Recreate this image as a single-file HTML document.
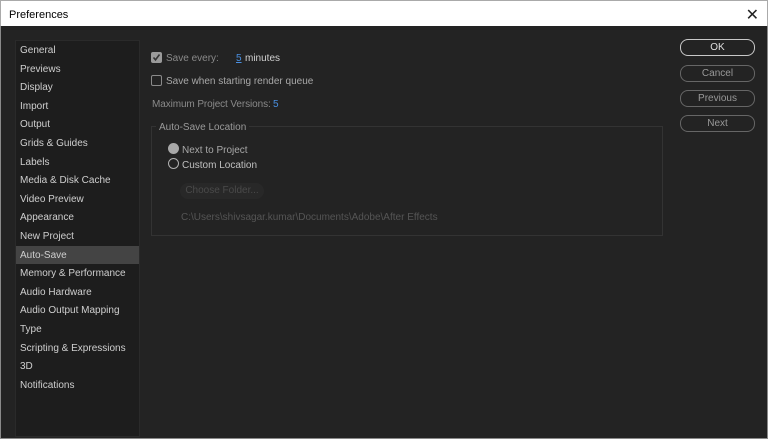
<!DOCTYPE html>
<html><head><meta charset="utf-8"><style>
*{margin:0;padding:0;box-sizing:border-box}
body{width:768px;height:439px;overflow:hidden;background:#232323;font-family:"Liberation Sans",sans-serif;font-size:10px;color:#c4c4c4;position:relative}
.title{position:absolute;left:0;top:0;width:768px;height:26px;background:#fff;border:1px solid #aaa;border-bottom:none;color:#000;font-size:11px;padding:8px 0 0 8px}
.x{position:absolute;right:8px;top:4px;font-size:16px;color:#222}
.frame{position:absolute;left:0;top:26px;width:768px;height:413px;border:1px solid #8a8a8a;border-top:none}
.side{position:absolute;left:15px;top:40px;width:125px;height:397px;background:#1d1d1d;border:1px solid #2a2a2a}
.side div{height:18.6px;line-height:19.6px;padding-left:4px;color:#cfcfcf}
.side .sel{background:#444}
.a{position:absolute;white-space:nowrap;margin-top:1px}
.cb{position:absolute;width:11px;height:11px;border:1px solid #8a8a8a;border-radius:2px}
.blue{color:#4a8fe0}
.grp{position:absolute;left:151px;top:126px;width:512px;height:110px;border:1px solid #333}
.btn{position:absolute;left:680px;width:75px;height:17px;border:1.5px solid #9a9a9a;border-radius:8px;text-align:center;line-height:15px;color:#999}
.rad{position:absolute;width:11px;height:11px;border-radius:50%}
</style></head><body>
<div class="title">Preferences<span class="x">✕</span></div>
<div class="frame"></div>
<div class="side">
<div>General</div><div>Previews</div><div>Display</div><div>Import</div><div>Output</div><div>Grids &amp; Guides</div><div>Labels</div><div>Media &amp; Disk Cache</div><div>Video Preview</div><div>Appearance</div><div>New Project</div><div class="sel">Auto-Save</div><div>Memory &amp; Performance</div><div>Audio Hardware</div><div>Audio Output Mapping</div><div>Type</div><div>Scripting &amp; Expressions</div><div>3D</div><div>Notifications</div>
</div>
<div class="cb" style="left:151px;top:52px;background:#9a9a9a;border-color:#9a9a9a"><svg width="9" height="9" viewBox="0 0 9 9" style="position:absolute;left:0;top:0"><path d="M1.5 4.5 L3.5 6.8 L7.5 1.5" stroke="#333" stroke-width="1.6" fill="none"/></svg></div>
<div class="a" style="left:166px;top:52px;color:#8a8a8a">Save every:</div>
<div class="a blue" style="left:236px;top:52px;text-decoration:underline">5</div>
<div class="a" style="left:245px;top:52px;color:#d0d0d0">minutes</div>
<div class="cb" style="left:151px;top:75px"></div>
<div class="a" style="left:166px;top:75px;color:#a8a8a8">Save when starting render queue</div>
<div class="a" style="left:152px;top:98px;color:#8a8a8a;letter-spacing:-0.1px">Maximum Project Versions:</div>
<div class="a blue" style="left:273px;top:98px">5</div>
<div class="grp"></div>
<div class="a" style="left:156px;top:121px;background:#232323;padding:0 3px;color:#9a9a9a">Auto-Save Location</div>
<div class="rad" style="left:168px;top:143px;background:#a8a8a8"></div>
<div class="a" style="left:182px;top:144px;color:#a8a8a8">Next to Project</div>
<div class="rad" style="left:168px;top:158px;border:1.5px solid #b0b0b0"></div>
<div class="a" style="left:182px;top:159px;color:#c0c0c0">Custom Location</div>
<div class="a" style="left:180px;top:182px;width:84px;height:16px;background:#282828;border-radius:8px;color:#4a4a4a;text-align:center;line-height:16px">Choose Folder...</div>
<div class="a" style="left:181px;top:211px;color:#555">C:\Users\shivsagar.kumar\Documents\Adobe\After Effects</div>
<div class="btn" style="top:39px;color:#e0e0e0;border-color:#c8c8c8">OK</div>
<div class="btn" style="top:65px;border-color:#666">Cancel</div>
<div class="btn" style="top:90px;border-color:#666">Previous</div>
<div class="btn" style="top:115px;border-color:#666">Next</div>
</body></html>
